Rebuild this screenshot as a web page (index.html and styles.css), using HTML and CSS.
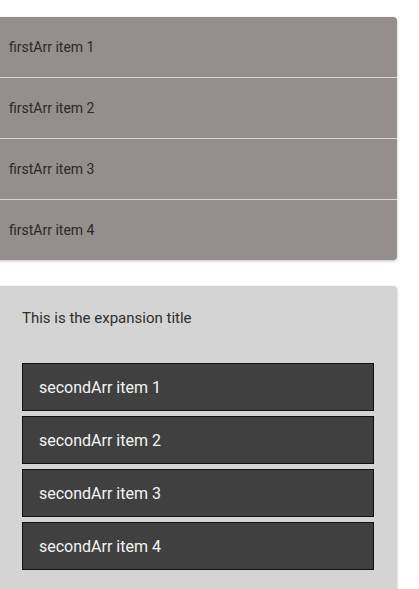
FILE: index.html
```html
<!DOCTYPE html>
<html lang="en">
<head>
    <meta charset="UTF-8">
    <title>Expansion list</title>
    <link rel="stylesheet" href="styles.css">
</head>
<body>

<div class="list-card">
    <div class="list-item">firstArr item 1</div>
    <div class="list-item">firstArr item 2</div>
    <div class="list-item">firstArr item 3</div>
    <div class="list-item">firstArr item 4</div>
</div>

<div class="expansion">
    <div class="expansion-title">This is the expansion title</div>
    <div class="expansion-body">
        <div class="second-item">secondArr item 1</div>
        <div class="second-item">secondArr item 2</div>
        <div class="second-item">secondArr item 3</div>
        <div class="second-item">secondArr item 4</div>
    </div>
</div>

</body>
</html>
```

FILE: styles.css
```css
body {
    margin: 0;
    font-family: Roboto, "Noto Sans", sans-serif;
    background: #fff;
    overflow: hidden;
}
.list-card {
    margin: 17px 0 0 -4px;
    width: 401px;
    background: #948f8d;
    border-radius: 4px;
    box-shadow: 0 1px 3px rgba(0, 0, 0, 0.25);
    overflow: hidden;
}
.list-item {
    height: 60px;
    display: flex;
    align-items: center;
    padding-left: 13px;
    font-size: 14px;
    color: #2a2a2a;
    border-bottom: 1px solid #d9d6d4;
}
.list-item:last-child {
    border-bottom: none;
}
.expansion {
    margin: 26px 0 0 -4px;
    width: 401px;
    background: #d4d4d4;
    border-radius: 4px;
    box-shadow: 0 1px 3px rgba(0, 0, 0, 0.25);
    padding-bottom: 24px;
}
.expansion-title {
    height: 64px;
    display: flex;
    align-items: center;
    padding-left: 26px;
    font-size: 15px;
    color: #2e2e2e;
}
.expansion-body {
    padding: 13px 0 0 26px;
    display: flex;
    flex-direction: column;
    gap: 5px;
}
.second-item {
    width: 352px;
    height: 48px;
    display: flex;
    align-items: center;
    padding-left: 16px;
    box-sizing: border-box;
    background: #404040;
    border: 1px solid #111;
    color: #f4f4f4;
    font-size: 16px;
}
```
